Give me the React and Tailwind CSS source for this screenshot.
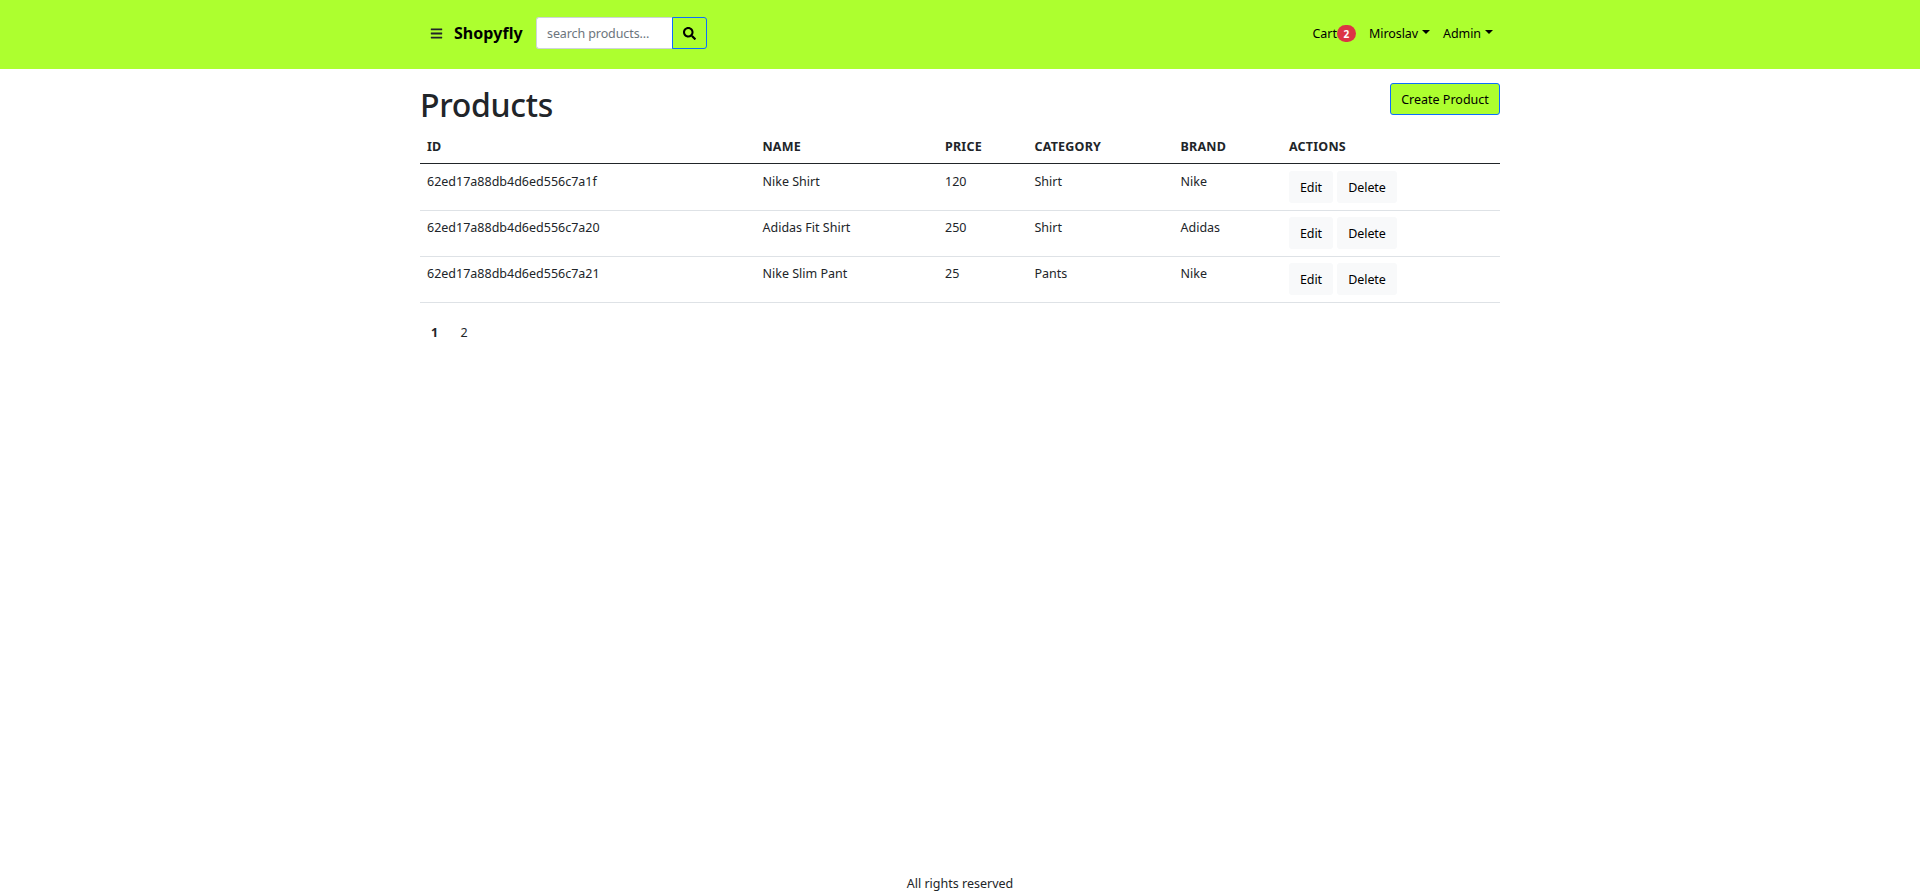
import React, { useState } from 'react';
import { FaBars, FaSearch } from 'react-icons/fa';

const products = [
  { _id: '62ed17a88db4d6ed556c7a1f', name: 'Nike Shirt', price: 120, category: 'Shirt', brand: 'Nike' },
  { _id: '62ed17a88db4d6ed556c7a20', name: 'Adidas Fit Shirt', price: 250, category: 'Shirt', brand: 'Adidas' },
  { _id: '62ed17a88db4d6ed556c7a21', name: 'Nike Slim Pant', price: 25, category: 'Pants', brand: 'Nike' },
];

const Caret = () => (
  <span className="ml-1 mb-[2px] border-x-4 border-t-4 border-x-transparent border-t-black" />
);

const Header = () => {
  const [query, setQuery] = useState('');

  return (
    <header className="h-[69px] bg-[#adff2f]">
      <nav className="mx-auto flex h-[66px] w-[1080px] items-center pl-[10px] pr-[7px] text-black">
        <button type="button" className="text-[#212529]">
          <FaBars size={13} />
        </button>
        <a href="#" className="ml-[11px] w-[71px] text-[16px] font-bold tracking-[0.05px]">
          Shopyfly
        </a>
        <form className="ml-[11px] flex h-8" onSubmit={(e) => e.preventDefault()}>
          <input
            type="text"
            value={query}
            onChange={(e) => setQuery(e.target.value)}
            placeholder="search products..."
            className="w-[136px] rounded-l-[3px] border border-r-0 border-[#ced4da] bg-white pt-[2px] pl-[10px] tracking-[-0.1px] placeholder:text-[#6c757d]"
          />
          <button
            type="submit"
            className="flex w-[35px] items-center justify-center rounded-r-[3px] border border-[#0d6efd]"
          >
            <FaSearch size={13} className="-ml-px" />
          </button>
        </form>
        <div className="ml-auto flex items-center">
          <a href="#" className="flex items-center">
            <span className="pt-[2px]">Cart</span>
            <span className="flex h-[17px] w-[19px] items-center justify-center rounded-full bg-[#dc3545] pt-px text-[10px] font-bold text-white">
              2
            </span>
          </a>
          <a href="#" className="ml-[13px] flex items-center">
            <span className="pt-[2px] tracking-[-0.07px]">Miroslav</span>
            <Caret />
          </a>
          <a href="#" className="ml-[13px] flex items-center">
            <span className="pt-[2px] tracking-[-0.07px]">Admin</span>
            <Caret />
          </a>
        </div>
      </nav>
    </header>
  );
};

const ProductRow = ({ product }) => (
  <tr className="align-top first:[&>td]:border-t first:[&>td]:border-t-transparent [&>td]:border-b [&>td]:border-b-[#dee2e6]">
    <td className="px-[7px] pt-[7px]">{product._id}</td>
    <td className="px-[6.5px] pt-[7px]">{product.name}</td>
    <td className="px-[7px] pt-[7px]">{product.price}</td>
    <td className="px-[6.5px] pt-[7px]">{product.category}</td>
    <td className="px-[6.5px] pt-[7px]">{product.brand}</td>
    <td className="px-[7px] pt-[6px] pb-[7px]">
      <div className="flex gap-1 tracking-[-0.1px] text-black">
        <button type="button" className="h-8 w-11 rounded-[3px] bg-[#f8f9fa] pt-px">
          Edit
        </button>
        <button type="button" className="h-8 w-[60px] rounded-[3px] bg-[#f8f9fa] pt-px">
          Delete
        </button>
      </div>
    </td>
  </tr>
);

const ProductList = () => (
  <main className="mx-auto w-[1080px] grow pt-[14px]">
    <div className="flex h-[49px] items-start justify-between">
      <h1 className="mt-[2px] text-[32px] leading-[39px] font-medium tracking-[-0.3px]">Products</h1>
      <button type="button" className="h-8 w-[110px] rounded-[3px] border border-[#0d6efd] bg-[#adff2f] pt-[2px] text-black">
        Create Product
      </button>
    </div>
    <table className="w-full table-fixed border-separate border-spacing-0 text-left">
      <colgroup>
        <col className="w-[336px]" />
        <col className="w-[182px]" />
        <col className="w-[90px]" />
        <col className="w-[146px]" />
        <col className="w-[108px]" />
        <col className="w-[218px]" />
      </colgroup>
      <thead>
        <tr className="h-8 tracking-[0.2px] [&>th]:border-b [&>th]:border-[#212529] [&>th]:pb-px">
          <th className="px-[7px]">ID</th>
          <th className="px-[6.5px]">NAME</th>
          <th className="px-[7px]">PRICE</th>
          <th className="px-[6.5px]">CATEGORY</th>
          <th className="px-[6.5px]">BRAND</th>
          <th className="px-[7px]">ACTIONS</th>
        </tr>
      </thead>
      <tbody>
        {products.map((product) => (
          <ProductRow key={product._id} product={product} />
        ))}
      </tbody>
    </table>
    <div className="mt-[20px] flex">
      <a href="#" className="w-[30px] pl-[11px] font-bold">1</a>
      <a href="#" className="pl-[10.5px]">2</a>
    </div>
  </main>
);

const App = () => (
  <div className="flex h-screen flex-col overflow-hidden bg-white font-['Noto_Sans',sans-serif] text-[12.5px] leading-5 text-[#212529]">
    <Header />
    <ProductList />
    <footer className="text-center leading-[14px]">All rights reserved</footer>
  </div>
);

export default App;
